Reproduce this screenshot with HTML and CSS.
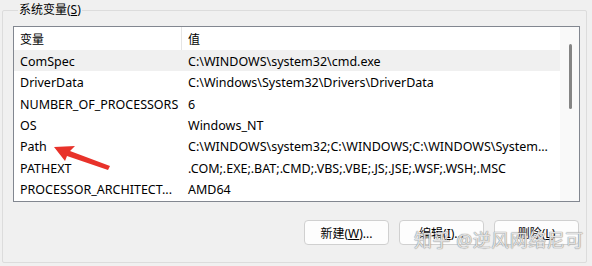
FILE: index.html
```html
<!DOCTYPE html>
<html lang="zh-CN">
<head>
    <meta charset="UTF-8">
    <title>系统变量</title>
    <link rel="stylesheet" href="styles.css">
</head>
<body>
    <fieldset class="group">
        <legend>系统变量(<u>S</u>)</legend>
        <div class="list">
            <div class="rows">
                <div class="row head">
                    <div class="name">变量</div>
                    <div class="value">值</div>
                </div>
                <div class="row selected">
                    <div class="name">ComSpec</div>
                    <div class="value">C:\WINDOWS\system32\cmd.exe</div>
                </div>
                <div class="row">
                    <div class="name">DriverData</div>
                    <div class="value">C:\Windows\System32\Drivers\DriverData</div>
                </div>
                <div class="row">
                    <div class="name">NUMBER_OF_PROCESSORS</div>
                    <div class="value">6</div>
                </div>
                <div class="row">
                    <div class="name">OS</div>
                    <div class="value">Windows_NT</div>
                </div>
                <div class="row">
                    <div class="name">Path</div>
                    <div class="value">C:\WINDOWS\system32;C:\WINDOWS;C:\WINDOWS\System...</div>
                </div>
                <div class="row">
                    <div class="name">PATHEXT</div>
                    <div class="value">.COM;.EXE;.BAT;.CMD;.VBS;.VBE;.JS;.JSE;.WSF;.WSH;.MSC</div>
                </div>
                <div class="row">
                    <div class="name">PROCESSOR_ARCHITECT...</div>
                    <div class="value">AMD64</div>
                </div>
            </div>
            <div class="scrollbar">
                <div class="thumb"></div>
            </div>
        </div>
        <div class="buttons">
            <button>新建(<u>W</u>)...</button>
            <button>编辑(<u>I</u>)...</button>
            <button>删除(<u>L</u>)</button>
        </div>
    </fieldset>

    <svg class="arrow" width="70" height="30" viewBox="0 0 70 30">
        <polygon points="2,4 23,3 18,8 58,23 56,27 15,13 13,18" fill="#e8322a"/>
    </svg>

    <div class="watermark">知乎 @逆风网络尼可</div>
</body>
</html>
```

FILE: styles.css
```css
* {
    margin: 0;
    padding: 0;
    box-sizing: border-box;
}
body {
    background: #f0f0f0;
    font-family: "Noto Sans", "Noto Sans CJK SC", sans-serif;
    font-size: 12.5px;
    color: #000;
    width: 592px;
    height: 266px;
    overflow: hidden;
    position: relative;
}
u {
    text-decoration: underline;
    text-underline-offset: 1px;
}
.group {
    margin: 1px 6px 0 2px;
    height: 262px;
    border: 1px solid #dcdcdc;
    border-radius: 2px;
    padding: 0 6px 0 10px;
}
.group legend {
    margin-left: 5px;
    padding: 0 1px;
    line-height: 18px;
    font-size: 12px;
}
.list {
    display: flex;
    margin-top: 7px;
    width: 567px;
    height: 176px;
    background: #fff;
    border: 1px solid #828790;
}
.rows {
    width: 546px;
}
.row {
    display: flex;
    height: 21.33px;
    align-items: center;
}
.row .name,
.row .value {
    padding-top: 2px;
}
.row.head {
    height: 23px;
    font-size: 12px;
}
.row.head .name,
.row.head .value {
    padding-top: 0;
}
.row.selected {
    background: #f0f0f0;
}
.name {
    width: 168px;
    padding-left: 6px;
    white-space: nowrap;
}
.head .name {
    height: 100%;
    display: flex;
    align-items: center;
    border-right: 1px solid #e5e5e5;
}
.value {
    padding-left: 6px;
    white-space: nowrap;
}
.scrollbar {
    flex: 1;
    background: #f9f9f9;
    padding: 17px 0 0 9px;
}
.thumb {
    width: 3px;
    height: 65px;
    background: #858585;
    border-radius: 2px;
}
.buttons {
    display: flex;
    justify-content: flex-end;
    gap: 10px;
    margin-top: 18px;
    padding-right: 1px;
}
.buttons button {
    width: 85px;
    height: 25px;
    font-family: inherit;
    font-size: 12px;
    background: #fdfdfd;
    border: 1px solid #d0d0d0;
    border-radius: 4px;
    color: #000;
}
.arrow {
    position: absolute;
    left: 52px;
    top: 143px;
}
.watermark {
    position: absolute;
    left: 414px;
    top: 226px;
    font-size: 18px;
    color: rgba(255, 255, 255, 0.75);
    text-shadow: 0 0 1px #888, 0 0 1px #888;
    letter-spacing: 0.5px;
}
```
